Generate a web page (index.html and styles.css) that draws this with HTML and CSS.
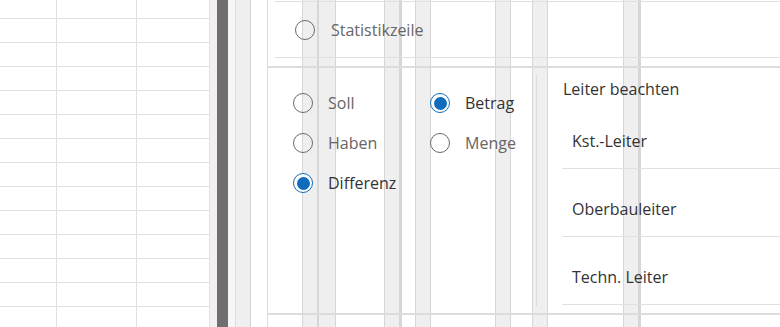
FILE: index.html
```html
<!DOCTYPE html>
<html lang="de">
<head>
    <meta charset="UTF-8">
    <title>Auswertung</title>
    <link rel="stylesheet" href="styles.css">
</head>
<body>
<div class="page">
    <div class="sheet">
        <div class="row first"><div></div><div></div><div></div></div>
        <div class="row"><div></div><div></div><div></div></div>
        <div class="row"><div></div><div></div><div></div></div>
        <div class="row"><div></div><div></div><div></div></div>
        <div class="row"><div></div><div></div><div></div></div>
        <div class="row"><div></div><div></div><div></div></div>
        <div class="row"><div></div><div></div><div></div></div>
        <div class="row"><div></div><div></div><div></div></div>
        <div class="row"><div></div><div></div><div></div></div>
        <div class="row"><div></div><div></div><div></div></div>
        <div class="row"><div></div><div></div><div></div></div>
        <div class="row"><div></div><div></div><div></div></div>
        <div class="row"><div></div><div></div><div></div></div>
        <div class="row"><div></div><div></div><div></div></div>
    </div>

    <!-- Splitter zwischen Tabelle und Einstellungen -->
    <div class="splitter">
        <div class="sp-edge"></div>
        <div class="sp-grip"></div>
        <div class="sp-light"></div>
        <div class="sp-band"></div>
    </div>
    <div class="spacer"></div>

    <div class="panel">
        <!-- Hilfslinien des Layouts -->
        <div class="guides">
            <div class="guide g1"></div>
            <div class="guide g2"></div>
            <div class="guide g3 double"></div>
            <div class="guide g4"></div>
            <div class="guide g5"></div>
            <div class="guide g6"></div>
            <div class="guide g7 double"></div>
        </div>

        <div class="stat-row">
            <label class="radio"><span class="dot"></span><span class="txt">Statistikzeile</span></label>
        </div>

        <div class="main">
            <div class="col col-a">
                <label class="radio"><span class="dot"></span><span class="txt">Soll</span></label>
                <label class="radio"><span class="dot"></span><span class="txt">Haben</span></label>
                <label class="radio on"><span class="dot"></span><span class="txt">Differenz</span></label>
            </div>
            <div class="col col-b">
                <label class="radio on"><span class="dot"></span><span class="txt">Betrag</span></label>
                <label class="radio"><span class="dot"></span><span class="txt">Menge</span></label>
            </div>
            <div class="leiter">
                <div class="leiter-head">Leiter beachten</div>
                <div class="leiter-item">Kst.-Leiter</div>
                <div class="leiter-item">Oberbauleiter</div>
                <div class="leiter-item">Techn. Leiter</div>
            </div>
        </div>
    </div>
</div>
</body>
</html>
```

FILE: styles.css
```css
*{
    margin: 0;
    padding: 0;
    box-sizing: border-box;
}
body{
    width: 780px;
    height: 327px;
    overflow: hidden;
    background: #fff;
    font-family: "Open Sans", "Noto Sans", sans-serif;
    font-size: 16px;
    color: #333;
}
.page{
    display: flex;
    height: 327px;
}

/* Tabelle links */
.sheet{
    width: 209px;
    flex: none;
}
.row{
    display: flex;
    height: 24px;
    border-bottom: 1px solid #e0e0e0;
}
.row.first{
    height: 19px;
}
.row div{
    border-right: 1px solid #e0e0e0;
}
.row div:nth-child(1){ width: 57px; }
.row div:nth-child(2){ width: 80px; }
.row div:nth-child(3){ flex: 1; border-right: none; }

/* Splitter */
.splitter{
    display: flex;
    flex: none;
    height: 100%;
}
.sp-edge{
    width: 8px;
    background: #f3eff2;
    border-left: 1px solid #e8e0e6;
}
.sp-grip{
    width: 11px;
    background: #6f6f6f;
}
.sp-light{
    width: 8px;
    background: #f7f5f7;
    border-right: 1px solid #e4dbe2;
}
.sp-band{
    width: 15px;
    background: #efefef;
    border-right: 1px solid #d2d2d2;
}
.spacer{
    width: 16px;
    flex: none;
}

/* Einstellungen rechts */
.panel{
    position: relative;
    flex: 1;
    border-left: 1px solid #dcdcdc;
}
.guides{
    position: absolute;
    top: 0;
    bottom: 0;
    left: 0;
    right: 0;
    z-index: 0;
}
.guide{
    position: absolute;
    top: 0;
    bottom: 0;
    width: 16px;
    background: #efefef;
    border-left: 1px solid #d6d6d6;
    border-right: 1px solid #d6d6d6;
}
.guide.double{
    box-shadow: 2px 0 0 #d6d6d6;
}
.g1{ left: 34px; }
.g2{ left: 50px; width: 18px; }
.g3{ left: 116px; }
.g4{ left: 147px; }
.g5{ left: 227px; }
.g6{ left: 264px; }
.g7{ left: 355px; }

.stat-row{
    position: relative;
    z-index: 1;
    margin: 1px 0 0 7px;
    height: 57px;
    border-top: 1px solid #e0e0e0;
    border-bottom: 1px solid #e0e0e0;
    display: flex;
    align-items: center;
    padding-left: 20px;
}
.main{
    position: relative;
    z-index: 1;
    margin-top: 8px;
    height: 249px;
    border-top: 2px solid #dcdcdc;
    border-bottom: 2px solid #dcdcdc;
    display: flex;
}
.col{
    display: flex;
    flex-direction: column;
    padding-top: 15px;
}
.col-a{
    width: 162px;
    padding-left: 25px;
}
.col-b{
    width: 106px;
}

.radio{
    display: flex;
    align-items: center;
    height: 40px;
    color: #666;
    cursor: pointer;
}
.radio .dot{
    width: 20px;
    height: 20px;
    border: 1px solid #6a6a6a;
    border-radius: 50%;
    margin-right: 15px;
    display: flex;
    align-items: center;
    justify-content: center;
    flex: none;
}
.radio.on{
    color: #333;
}
.radio.on .dot{
    border-color: #0f6cbd;
    background: #fff;
}
.radio.on .dot::after{
    content: "";
    width: 13px;
    height: 13px;
    border-radius: 50%;
    background: #0f6cbd;
}
.stat-row .radio .dot{
    margin-right: 16px;
}

.leiter{
    flex: 1;
    margin: 7px 0 7px 0;
    border-left: 1px solid #dcdcdc;
    padding: 4px 0 0 26px;
}
.leiter-head{
    height: 22px;
    line-height: 20px;
}
.leiter-item{
    height: 68px;
    padding: 30px 0 0 10px;
    line-height: 20px;
    border-bottom: 1px solid #e0e0e0;
    margin-left: -1px;
}
```
